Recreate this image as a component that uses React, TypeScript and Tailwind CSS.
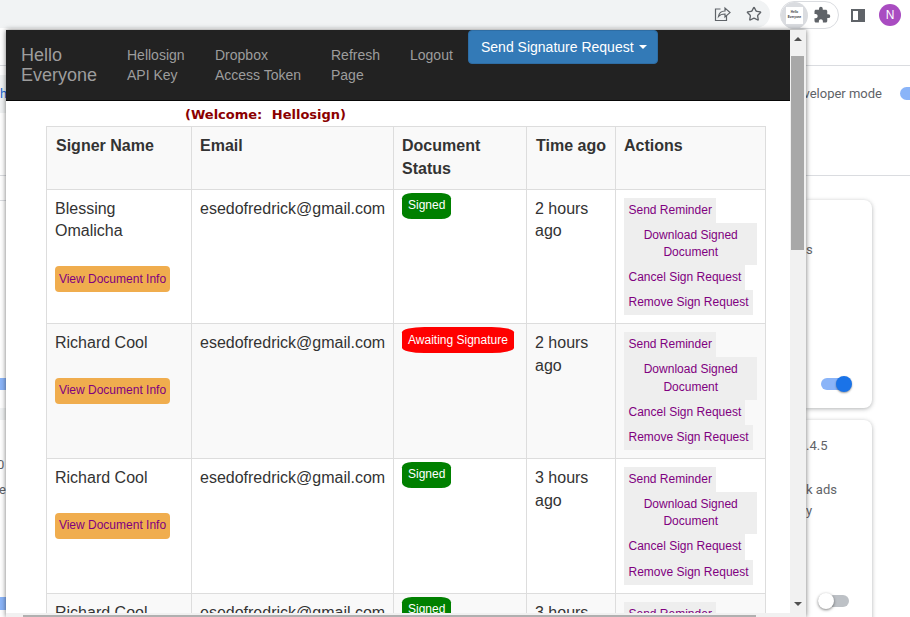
import React from "react";
import { MdExtension } from "react-icons/md";
import { Star } from "lucide-react";

const rows = [
  { name: "Blessing Omalicha", status: "Signed", time: "2 hours ago" },
  { name: "Richard Cool", status: "Awaiting Signature", time: "2 hours ago" },
  { name: "Richard Cool", status: "Signed", time: "3 hours ago" },
  { name: "Richard Cool", status: "Signed", time: "3 hours ago" },
];

function ActionLink({ children }: { children: React.ReactNode }) {
  return (
    <a className="block w-fit bg-[#eeeeee] pb-[4px] pl-[4.5px] pr-[4px] pt-[4px] text-center text-[12px] leading-[1.42857] text-[#800080]">
      {children}
    </a>
  );
}

function NavLink({ w, children }: { w: string; children: React.ReactNode }) {
  return <a className={`${w} shrink-0 pl-[15px] pr-[10px] pt-[15px] text-[14px] leading-[20px] text-[#9d9d9d]`}>{children}</a>;
}

function Toolbar() {
  return (
    <div className="flex h-[30px] items-start bg-white">
      <div className="flex h-[28px] w-[770px] items-center justify-end rounded-r-full bg-[#f1f3f4] pr-[8px]">
        <svg className="mr-[15px] text-[#5f6368]" width="18" height="18" viewBox="0 0 18 18" fill="none" stroke="currentColor" strokeWidth="1.2">
          <path d="M7.5 4H2.5v11.5h11V11" />
          <path d="M5.5 11.5c.5-3.5 3-5.5 6.5-5.5V3l5 4.6-5 4.4V9c-2.8 0-5 .6-6.5 2.5z" />
        </svg>
        <Star size={16} strokeWidth={2} className="text-[#5f6368]" />
      </div>
      <div className="ml-[10px] mt-[1px] flex h-[28px] w-[59px] items-center rounded-full border border-[#dadce0]">
        <div className="flex h-[27px] w-[27px] shrink-0 items-center justify-center rounded-full bg-[#dadce0]">
          <div className="flex h-[17px] w-[17px] flex-col items-center justify-center bg-white text-[3px] font-bold leading-[5px] text-[#333]">
            <span>Hello</span>
            <span>Everyone</span>
          </div>
        </div>
        <MdExtension size={18} className="ml-[5px] text-[#5f6368]" />
      </div>
      <div className="ml-[12px] mt-[9px] flex h-[13px] w-[14px] justify-end border-2 border-[#5f6368]">
        <div className="h-full w-[5px] bg-[#5f6368]" />
      </div>
      <div className="ml-[14px] mt-[4px] flex h-[22px] w-[22px] items-center justify-center rounded-full bg-[#a94cc1] text-[12px] text-white">N</div>
    </div>
  );
}

function LeftStrip() {
  return (
    <div className="flex w-[6px] shrink-0 flex-col overflow-hidden font-['Roboto',sans-serif] text-[13px] text-[#5f6368]">
      <div className="mt-[35px] h-px shrink-0 bg-[#dadce0]" />
      <div className="mt-[9px] flex h-[38px] shrink-0 items-center bg-[#f1f3f4] text-[#1967d2]">h</div>
      <div className="mt-[62px] h-px shrink-0 bg-[#dadce0]" />
      <div className="mt-[24px] h-px shrink-0 bg-[#dadce0]" />
      <div className="mt-[177px] h-[12px] shrink-0 bg-[#8ab4f8]" />
      <div className="mt-[18px] h-[12px] shrink-0 bg-[#f1f3f4]" />
      <div className="-ml-[3px] mt-[36px] h-[18px] shrink-0 leading-[18px]">0</div>
      <div className="-ml-[1px] mt-[7px] h-[18px] shrink-0 leading-[18px]">e</div>
      <div className="mt-[98px] h-[13px] shrink-0 bg-[#8ab4f8]" />
    </div>
  );
}

function RightStrip() {
  return (
    <div className="flex min-w-0 flex-1 flex-col font-['Roboto',sans-serif] text-[13px] text-[#5f6368]">
      <div className="mt-[35px] h-px shrink-0 bg-[#dadce0]" />
      <div className="mt-[21px] flex h-[13px] shrink-0 items-center justify-end overflow-hidden">
        <span className="shrink-0 whitespace-nowrap">Developer mode</span>
        <div className="ml-[18px] h-[13px] w-[10px] shrink-0 rounded-l-full bg-[#8ab4f8]" />
      </div>
      <div className="mt-[75px] h-px shrink-0 bg-[#dadce0]" />
      <div className="mt-[24px] flex h-[208px] w-[66px] shrink-0 flex-col rounded-r-[8px] bg-white shadow-[0_1px_4px_rgba(60,64,67,0.4)]">
        <span className="mt-[41px] h-[18px] leading-[18px]">s</span>
        <div className="ml-[15px] mt-[119px] flex h-[12px] w-[24px] items-center rounded-full bg-[#8ab4f8]">
          <div className="ml-[15px] h-[16px] w-[16px] shrink-0 rounded-full bg-[#1a73e8] shadow-[0_1px_2px_rgba(0,0,0,0.4)]" />
        </div>
      </div>
      <div className="mt-[12px] flex h-[210px] w-[66px] shrink-0 flex-col rounded-r-[8px] bg-white shadow-[0_1px_4px_rgba(60,64,67,0.4)]">
        <span className="mt-[17px] h-[18px] whitespace-nowrap leading-[18px]">.4.5</span>
        <span className="mt-[26px] h-[18px] whitespace-nowrap leading-[18px]">k ads</span>
        <span className="mt-[3px] h-[18px] leading-[18px]">y</span>
        <div className="ml-[12px] mt-[75px] flex h-[12px] w-[31px] items-center rounded-full bg-[#bdc1c6]">
          <div className="h-[16px] w-[16px] shrink-0 rounded-full bg-white shadow-[0_1px_3px_rgba(0,0,0,0.5)]" />
        </div>
      </div>
    </div>
  );
}

function VerticalScrollbar() {
  return (
    <div className="flex w-[16px] shrink-0 flex-col bg-[#f1f1f1]">
      <div className="ml-[4px] mt-[7px] h-0 w-0 border-x-[4px] border-b-[4px] border-x-transparent border-b-[#505050]" />
      <div className="ml-px mt-[15px] h-[194px] w-[13px] bg-[#a8a8a8]" />
      <div className="mb-[11px] ml-[4px] mt-auto h-0 w-0 border-x-[4px] border-t-[4px] border-x-transparent border-t-[#505050]" />
    </div>
  );
}

function Navbar() {
  return (
    <nav className="flex h-[71px] shrink-0 items-start border-b border-[#080808] bg-[#222222]">
      <a className="w-[106px] shrink-0 px-[15px] pt-[15px] text-[18px] leading-[20px] text-[#9d9d9d]">Hello Everyone</a>
      <NavLink w="w-[88px]">Hellosign API Key</NavLink>
      <NavLink w="w-[116px]">Dropbox Access Token</NavLink>
      <NavLink w="w-[79px]">Refresh Page</NavLink>
      <NavLink w="w-[73px]">Logout</NavLink>
      <button className="flex h-[34px] w-[190px] items-center rounded-[4px] border border-[#2e6da4] bg-[#337ab7] pl-[12px] text-[14px] text-white">
        Send Signature Request
        <span className="ml-[5px] h-0 w-0 border-x-[4px] border-t-[4px] border-x-transparent border-t-white" />
      </button>
    </nav>
  );
}

function SignersTable() {
  const th = "border border-[#dddddd] p-[8px] text-left align-top font-bold";
  const thShifted = "border border-[#dddddd] py-[8px] pl-[9px] pr-[7px] text-left align-top font-bold";
  const td = "border border-[#dddddd] p-[8px] align-top";
  return (
    <table className="ml-[40px] w-[719px] shrink-0 table-fixed border-collapse text-[16px] leading-[1.42857] text-[#333333]">
      <colgroup>
        <col className="w-[145px]" />
        <col className="w-[202px]" />
        <col className="w-[133px]" />
        <col className="w-[89px]" />
        <col className="w-[150px]" />
      </colgroup>
      <thead>
        <tr className="bg-[#f9f9f9]">
          <th className={thShifted}>Signer Name</th>
          <th className={th}>Email</th>
          <th className={th}>Document Status</th>
          <th className={thShifted}>Time ago</th>
          <th className={th}>Actions</th>
        </tr>
      </thead>
      <tbody>
        {rows.map((r, i) => (
          <tr key={i} className={i % 2 === 1 ? "bg-[#f9f9f9]" : "bg-white"}>
            <td className={td}>
              {r.name}
              <a className="mt-[22.86px] flex h-[26px] w-[115px] items-center justify-center rounded-[4px] bg-[#f0ad4e] text-[12px] text-[#800080]">
                View Document Info
              </a>
            </td>
            <td className={td}>esedofredrick@gmail.com</td>
            <td className={td}>
              <span
                className={`-mt-[5px] flex h-[26px] w-fit items-center rounded-[20%] px-[6px] text-[12px] text-white ${
                  r.status === "Signed" ? "bg-[#008000]" : "bg-[#ff0000]"
                }`}
              >
                {r.status}
              </span>
            </td>
            <td className={td}>{r.time}</td>
            <td className={td}>
              <ActionLink>Send Reminder</ActionLink>
              <ActionLink>Download Signed Document</ActionLink>
              <ActionLink>Cancel Sign Request</ActionLink>
              <ActionLink>Remove Sign Request</ActionLink>
            </td>
          </tr>
        ))}
      </tbody>
    </table>
  );
}

function Popup() {
  return (
    <div className="relative z-10 flex h-[587px] w-[800px] shrink-0 overflow-hidden bg-white shadow-[0_0_5px_rgba(0,0,0,0.55)]">
      <div className="flex min-w-0 flex-1 flex-col">
        <div className="flex min-h-0 flex-1 flex-col overflow-hidden">
          <Navbar />
          <div className="h-[24.9px] shrink-0 pl-[179px] pt-[5px] font-['DejaVu_Sans',sans-serif] text-[13px] font-bold leading-[18px] text-[#8b0000] [word-spacing:5px]">
            (Welcome: Hellosign)
          </div>
          <SignersTable />
        </div>
        <div className="h-[4px] shrink-0 bg-[#f1f1f1] pl-[17px] pt-[2px]">
          <div className="h-[2px] w-[733px] bg-[#b0b0b0]" />
        </div>
      </div>
      <VerticalScrollbar />
    </div>
  );
}

export default function App() {
  return (
    <div className="h-[617px] w-[910px] overflow-hidden bg-white font-['Liberation_Sans',Arial,sans-serif]">
      <Toolbar />
      <div className="flex h-[587px]">
        <LeftStrip />
        <Popup />
        <RightStrip />
      </div>
    </div>
  );
}
